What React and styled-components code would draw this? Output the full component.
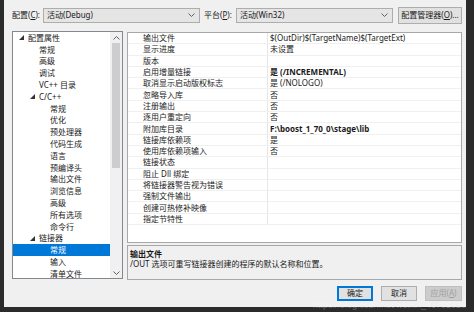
import React from "react";
import styled, { createGlobalStyle } from "styled-components";

const GlobalStyle = createGlobalStyle`
	body {
		margin: 0;
		background: #2b2b2b;
	}
`;

const font = `"Noto Sans", "Noto Sans CJK SC", sans-serif`;

const Frame = styled.div`
	position: relative;
	width: 474px;
	height: 312px;
	padding-left: 4px;
	box-sizing: border-box;
	background: #2b2b2b;
	overflow: hidden;
	font-family: ${font};
	font-size: 8px;
	color: #1a1a1a;
`;

const Dialog = styled.div`
	width: 462px;
	height: 307px;
	padding: 0 4px 0 8px;
	box-sizing: border-box;
	background: #f0f0f0;
	display: flex;
	flex-direction: column;
`;

const TopBar = styled.div`
	height: 31px;
	display: flex;
	align-items: center;
	padding-bottom: 1px;
	box-sizing: border-box;
`;

const Label = styled.span`
	width: ${p => p.$w}px;
	margin-left: ${p => p.$ml || 0}px;
	white-space: nowrap;
	line-height: 10px;
`;

const Combo = styled.div`
	width: 157px;
	height: 15px;
	box-sizing: border-box;
	border: 1px solid #adadad;
	background: #e5e5e5;
	display: flex;
	align-items: center;
	justify-content: space-between;
	padding: 0 4px 0 3px;
	line-height: 10px;
`;

const Button = styled.div`
	width: ${p => p.$w}px;
	height: ${p => p.$h || 15}px;
	margin-left: ${p => p.$ml || 0}px;
	box-sizing: border-box;
	display: flex;
	align-items: center;
	justify-content: center;
	white-space: nowrap;
	line-height: 10px;
	background: ${p => (p.$disabled ? "#cccccc" : "#e1e1e1")};
	color: ${p => (p.$disabled ? "#a0a0a0" : "#1a1a1a")};
	border: 1px solid ${p => (p.$focus ? "#0078d7" : p.$disabled ? "#bfbfbf" : "#adadad")};
	box-shadow: ${p => (p.$focus ? "inset 0 0 0 1px #0078d7" : "none")};
`;

const Body = styled.div`
	height: 249px;
	display: flex;
	gap: 4px;
`;

const Tree = styled.div`
	width: 111px;
	height: 248px;
	box-sizing: border-box;
	border: 1px solid #828790;
	background: #fff;
	display: flex;
	overflow: hidden;
`;

const TreeList = styled.div`
	flex: 1;
	display: flex;
	flex-direction: column;
`;

const TreeRow = styled.div`
	height: 11.8px;
	flex-shrink: 0;
	display: flex;
	align-items: center;
	padding-left: ${p => 4 + p.$level * 11}px;
	background: ${p => (p.$selected ? "#0078d7" : "transparent")};
	color: ${p => (p.$selected ? "#fff" : "#1a1a1a")};
	white-space: nowrap;
	line-height: 10px;
`;

const Expander = styled.span`
	width: 11px;
	flex-shrink: 0;
	display: flex;
	align-items: center;
	padding-left: 2px;
	box-sizing: border-box;
`;

const ScrollBar = styled.div`
	width: 12px;
	background: #f0f0f0;
	display: flex;
	flex-direction: column;
	align-items: center;
`;

const ScrollArrow = styled.div`
	height: 11px;
	width: 100%;
	display: flex;
	align-items: center;
	justify-content: center;
`;

const ScrollTrack = styled.div`
	flex: 1;
	width: 100%;
	display: flex;
	justify-content: center;
`;

const Thumb = styled.div`
	width: 8px;
	height: 125px;
	background: #cdcdcd;
`;

const RightCol = styled.div`
	flex: 1;
	display: flex;
	flex-direction: column;
	gap: 2px;
	padding-top: 1px;
`;

const Grid = styled.div`
	height: 211px;
	box-sizing: border-box;
	border: 1px solid #a8a8a8;
	background: #fff;
	display: flex;
	flex-direction: column;
`;

const GridRow = styled.div`
	height: 11.3px;
	flex-shrink: 0;
	display: grid;
	grid-template-columns: 139px 1fr;
	border-bottom: 1px solid #f0f0f0;
	box-sizing: border-box;
	line-height: 10px;
	white-space: nowrap;
`;

const NameCell = styled.div`
	padding-left: 15px;
	display: flex;
	align-items: center;
`;

const ValueCell = styled.div`
	border-left: 1px solid #e6e6e6;
	padding-left: 2px;
	display: flex;
	align-items: center;
	font-weight: ${p => (p.$bold ? 700 : 400)};
`;

const Desc = styled.div`
	height: 35px;
	box-sizing: border-box;
	border: 1px solid #a8a8a8;
	padding: 3px 2px;
	line-height: 10px;
`;

const DescTitle = styled.div`
	font-weight: 700;
`;

const Footer = styled.div`
	flex: 1;
	display: flex;
	justify-content: flex-end;
	align-items: center;
	gap: 8px;
	padding-bottom: 1px;
`;

const Watermark = styled.div`
	position: absolute;
	right: 8px;
	bottom: 2px;
	font-family: "Liberation Sans", sans-serif;
	font-size: 9px;
	color: rgba(255, 255, 255, 0.3);
	white-space: nowrap;
`;

const Chevron = ({ up }) => (
	<svg width="7" height="4" viewBox="0 0 7 4">
		<polyline
			points={up ? "0.5,3.5 3.5,0.5 6.5,3.5" : "0.5,0.5 3.5,3.5 6.5,0.5"}
			fill="none"
			stroke="#606060"
			strokeWidth="1"
		/>
	</svg>
);

const Triangle = () => (
	<svg width="5" height="5" viewBox="0 0 5 5">
		<polygon points="5,0 5,5 0,5" fill="#333" />
	</svg>
);

const treeItems = [
	{ text: "配置属性", level: 0, open: true },
	{ text: "常规", level: 1 },
	{ text: "高级", level: 1 },
	{ text: "调试", level: 1 },
	{ text: "VC++ 目录", level: 1 },
	{ text: "C/C++", level: 1, open: true },
	{ text: "常规", level: 2 },
	{ text: "优化", level: 2 },
	{ text: "预处理器", level: 2 },
	{ text: "代码生成", level: 2 },
	{ text: "语言", level: 2 },
	{ text: "预编译头", level: 2 },
	{ text: "输出文件", level: 2 },
	{ text: "浏览信息", level: 2 },
	{ text: "高级", level: 2 },
	{ text: "所有选项", level: 2 },
	{ text: "命令行", level: 2 },
	{ text: "链接器", level: 1, open: true },
	{ text: "常规", level: 2, selected: true },
	{ text: "输入", level: 2 },
	{ text: "清单文件", level: 2 },
];

const props = [
	["输出文件", "$(OutDir)$(TargetName)$(TargetExt)"],
	["显示进度", "未设置"],
	["版本", ""],
	["启用增量链接", "是 (/INCREMENTAL)", true],
	["取消显示启动版权标志", "是 (/NOLOGO)"],
	["忽略导入库", "否"],
	["注册输出", "否"],
	["逐用户重定向", "否"],
	["附加库目录", "F:\\boost_1_70_0\\stage\\lib", true],
	["链接库依赖项", "是"],
	["使用库依赖项输入", "否"],
	["链接状态", ""],
	["阻止 Dll 绑定", ""],
	["将链接器警告视为错误", ""],
	["强制文件输出", ""],
	["创建可热修补映像", ""],
	["指定节特性", ""],
];

const App = () => (
	<Frame>
		<GlobalStyle />
		<Dialog>
			<TopBar>
				<Label $w={31}>
					配置(<u>C</u>):
				</Label>
				<Combo>
					<span>活动(Debug)</span>
					<Chevron />
				</Combo>
				<Label $w={32} $ml={4}>
					平台(<u>P</u>):
				</Label>
				<Combo>
					<span>活动(Win32)</span>
					<Chevron />
				</Combo>
				<Button $w={64} $h={17} $ml={5}>
					配置管理器(<u>O</u>)...
				</Button>
			</TopBar>
			<Body>
				<Tree>
					<TreeList>
						{treeItems.map((item, i) => (
							<TreeRow key={i} $level={item.level} $selected={item.selected}>
								<Expander>{item.open && <Triangle />}</Expander>
								{item.text}
							</TreeRow>
						))}
					</TreeList>
					<ScrollBar>
						<ScrollArrow>
							<Chevron up />
						</ScrollArrow>
						<ScrollTrack>
							<Thumb />
						</ScrollTrack>
						<ScrollArrow>
							<Chevron />
						</ScrollArrow>
					</ScrollBar>
				</Tree>
				<RightCol>
					<Grid>
						{props.map(([name, value, bold], i) => (
							<GridRow key={i}>
								<NameCell>{name}</NameCell>
								<ValueCell $bold={bold}>{value}</ValueCell>
							</GridRow>
						))}
					</Grid>
					<Desc>
						<DescTitle>输出文件</DescTitle>
						<div>/OUT 选项可重写链接器创建的程序的默认名称和位置。</div>
					</Desc>
				</RightCol>
			</Body>
			<Footer>
				<Button $w={36} $focus>
					确定
				</Button>
				<Button $w={36}>取消</Button>
				<Button $w={37} $disabled>
					应用(<u>A</u>)
				</Button>
			</Footer>
		</Dialog>
		<Watermark>https://blog.csdn.net/weixin_43702320</Watermark>
	</Frame>
);

export default App;
